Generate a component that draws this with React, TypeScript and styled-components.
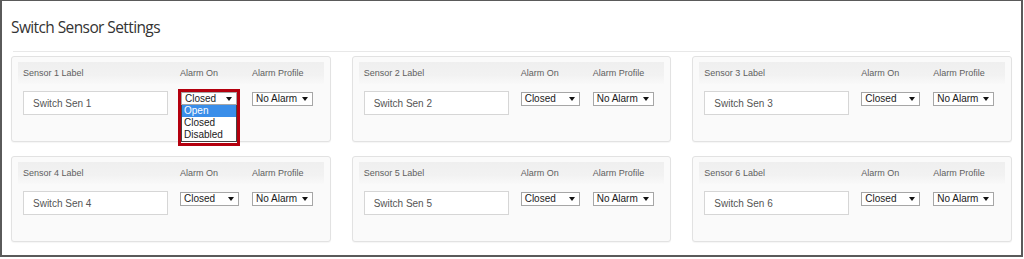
import styled, { createGlobalStyle } from 'styled-components';

const GlobalStyle = createGlobalStyle`
  html, body {
    margin: 0;
    padding: 0;
    background: #fff;
  }
  body {
    font-family: 'Liberation Sans', Arial, sans-serif;
  }
  * {
    box-sizing: border-box;
  }
`;

const Frame = styled.div`
  width: 1023px;
  height: 257px;
  border: 2px solid #5a5a5a;
  border-top-width: 1px;
  background: #fff;
  overflow: hidden;
`;

const Title = styled.h1`
  margin: 15px 0 0 9px;
  font-family: 'Open Sans', 'Noto Sans', sans-serif;
  font-size: 15.5px;
  font-weight: 400;
  line-height: 22px;
  letter-spacing: -0.6px;
  color: #333;
`;

const Divider = styled.hr`
  height: 0;
  margin: 13px 11px 0 11px;
  border: 0;
  border-top: 1px solid #e8e8e8;
`;

const CardGrid = styled.div`
  display: grid;
  grid-template-columns: repeat(3, 1fr);
  gap: 14px 21px;
  margin: 4px 9px 0 9px;
`;

const SensorCard = styled.div`
  padding: 5px 6px 26px;
  background: #fafafa;
  border: 1px solid #e2e2e2;
  border-radius: 3px;
  box-shadow: 0 1px 1px rgba(0, 0, 0, 0.04);
`;

const FieldRow = styled.div<{ $band?: boolean }>`
  display: grid;
  grid-template-columns: 145px 60px 61px;
  column-gap: 12px;
  padding: 0 5px;
  align-items: ${(p) => (p.$band ? 'center' : 'start')};
  height: ${(p) => (p.$band ? '22px' : 'auto')};
  margin-top: ${(p) => (p.$band ? '0' : '7px')};
  background: ${(p) =>
    p.$band ? 'linear-gradient(to bottom, #efefef 0%, #f2f2f2 60%, #f9f9f9 100%)' : 'none'};
`;

const FieldLabel = styled.span`
  font-size: 9px;
  color: #5f5f5f;
  white-space: nowrap;
`;

const TextInput = styled.input`
  width: 100%;
  height: 24px;
  padding: 0 9px;
  border: 1px solid #d6d6d6;
  border-radius: 0;
  background: #fff;
  font-family: 'Liberation Sans', Arial, sans-serif;
  font-size: 10px;
  color: #555;
  outline: none;
`;

const Cell = styled.div`
  position: relative;
`;

const SelectBox = styled.div<{ $width: number; $flush?: boolean }>`
  display: flex;
  align-items: center;
  justify-content: space-between;
  width: ${(p) => p.$width}px;
  height: ${(p) => (p.$flush ? '13px' : '14px')};
  margin-top: ${(p) => (p.$flush ? '0' : '1px')};
  padding: 0 4px 0 3px;
  border: 1px solid #a6a6a6;
  background: #fff;
  font-size: 10px;
  line-height: 12px;
  color: #1a1a1a;
  white-space: nowrap;
`;

const Arrow = styled.svg`
  flex: none;
  width: 6px;
  height: 4px;
`;

const DropdownCallout = styled.div`
  position: absolute;
  top: -2px;
  left: -2px;
  z-index: 2;
  display: flex;
  flex-direction: column;
  width: 62px;
  height: 57px;
  border: 3px solid #b4000e;
  background: #fff;
`;

const OptionList = styled.ul`
  margin: 0;
  padding: 0;
  list-style: none;
  border: 1px solid #444;
  border-top: 0;
`;

const OptionItem = styled.li<{ $active?: boolean }>`
  height: 12px;
  padding: 0 2px;
  font-size: 10px;
  line-height: 12px;
  color: ${(p) => (p.$active ? '#fff' : '#1a1a1a')};
  background: ${(p) => (p.$active ? '#3a8ee9' : '#fff')};
`;

const Select = ({ value, width, flush }: { value: string; width: number; flush?: boolean }) => (
  <SelectBox $width={width} $flush={flush}>
    <span>{value}</span>
    <Arrow viewBox="0 0 6 4">
      <polygon points="0,0 6,0 3,4" fill="#111" />
    </Arrow>
  </SelectBox>
);

const alarmOnOptions = ['Open', 'Closed', 'Disabled'];
const sensors = [1, 2, 3, 4, 5, 6];

const App = () => {
  return (
    <>
      <GlobalStyle />
      <Frame>
        <Title>Switch Sensor Settings</Title>
        <Divider />
        <CardGrid>
          {sensors.map((n) => (
            <SensorCard key={n}>
              <FieldRow $band>
                <FieldLabel>Sensor {n} Label</FieldLabel>
                <FieldLabel>Alarm On</FieldLabel>
                <FieldLabel>Alarm Profile</FieldLabel>
              </FieldRow>
              <FieldRow>
                <TextInput defaultValue={`Switch Sen ${n}`} />
                <Cell>
                  <Select value="Closed" width={59} />
                  {n === 1 && (
                    <DropdownCallout>
                      <Select value="Closed" width={56} flush />
                      <OptionList>
                        {alarmOnOptions.map((opt) => (
                          <OptionItem key={opt} $active={opt === 'Open'}>
                            {opt}
                          </OptionItem>
                        ))}
                      </OptionList>
                    </DropdownCallout>
                  )}
                </Cell>
                <Cell>
                  <Select value="No Alarm" width={61} />
                </Cell>
              </FieldRow>
            </SensorCard>
          ))}
        </CardGrid>
      </Frame>
    </>
  );
};

export default App;
